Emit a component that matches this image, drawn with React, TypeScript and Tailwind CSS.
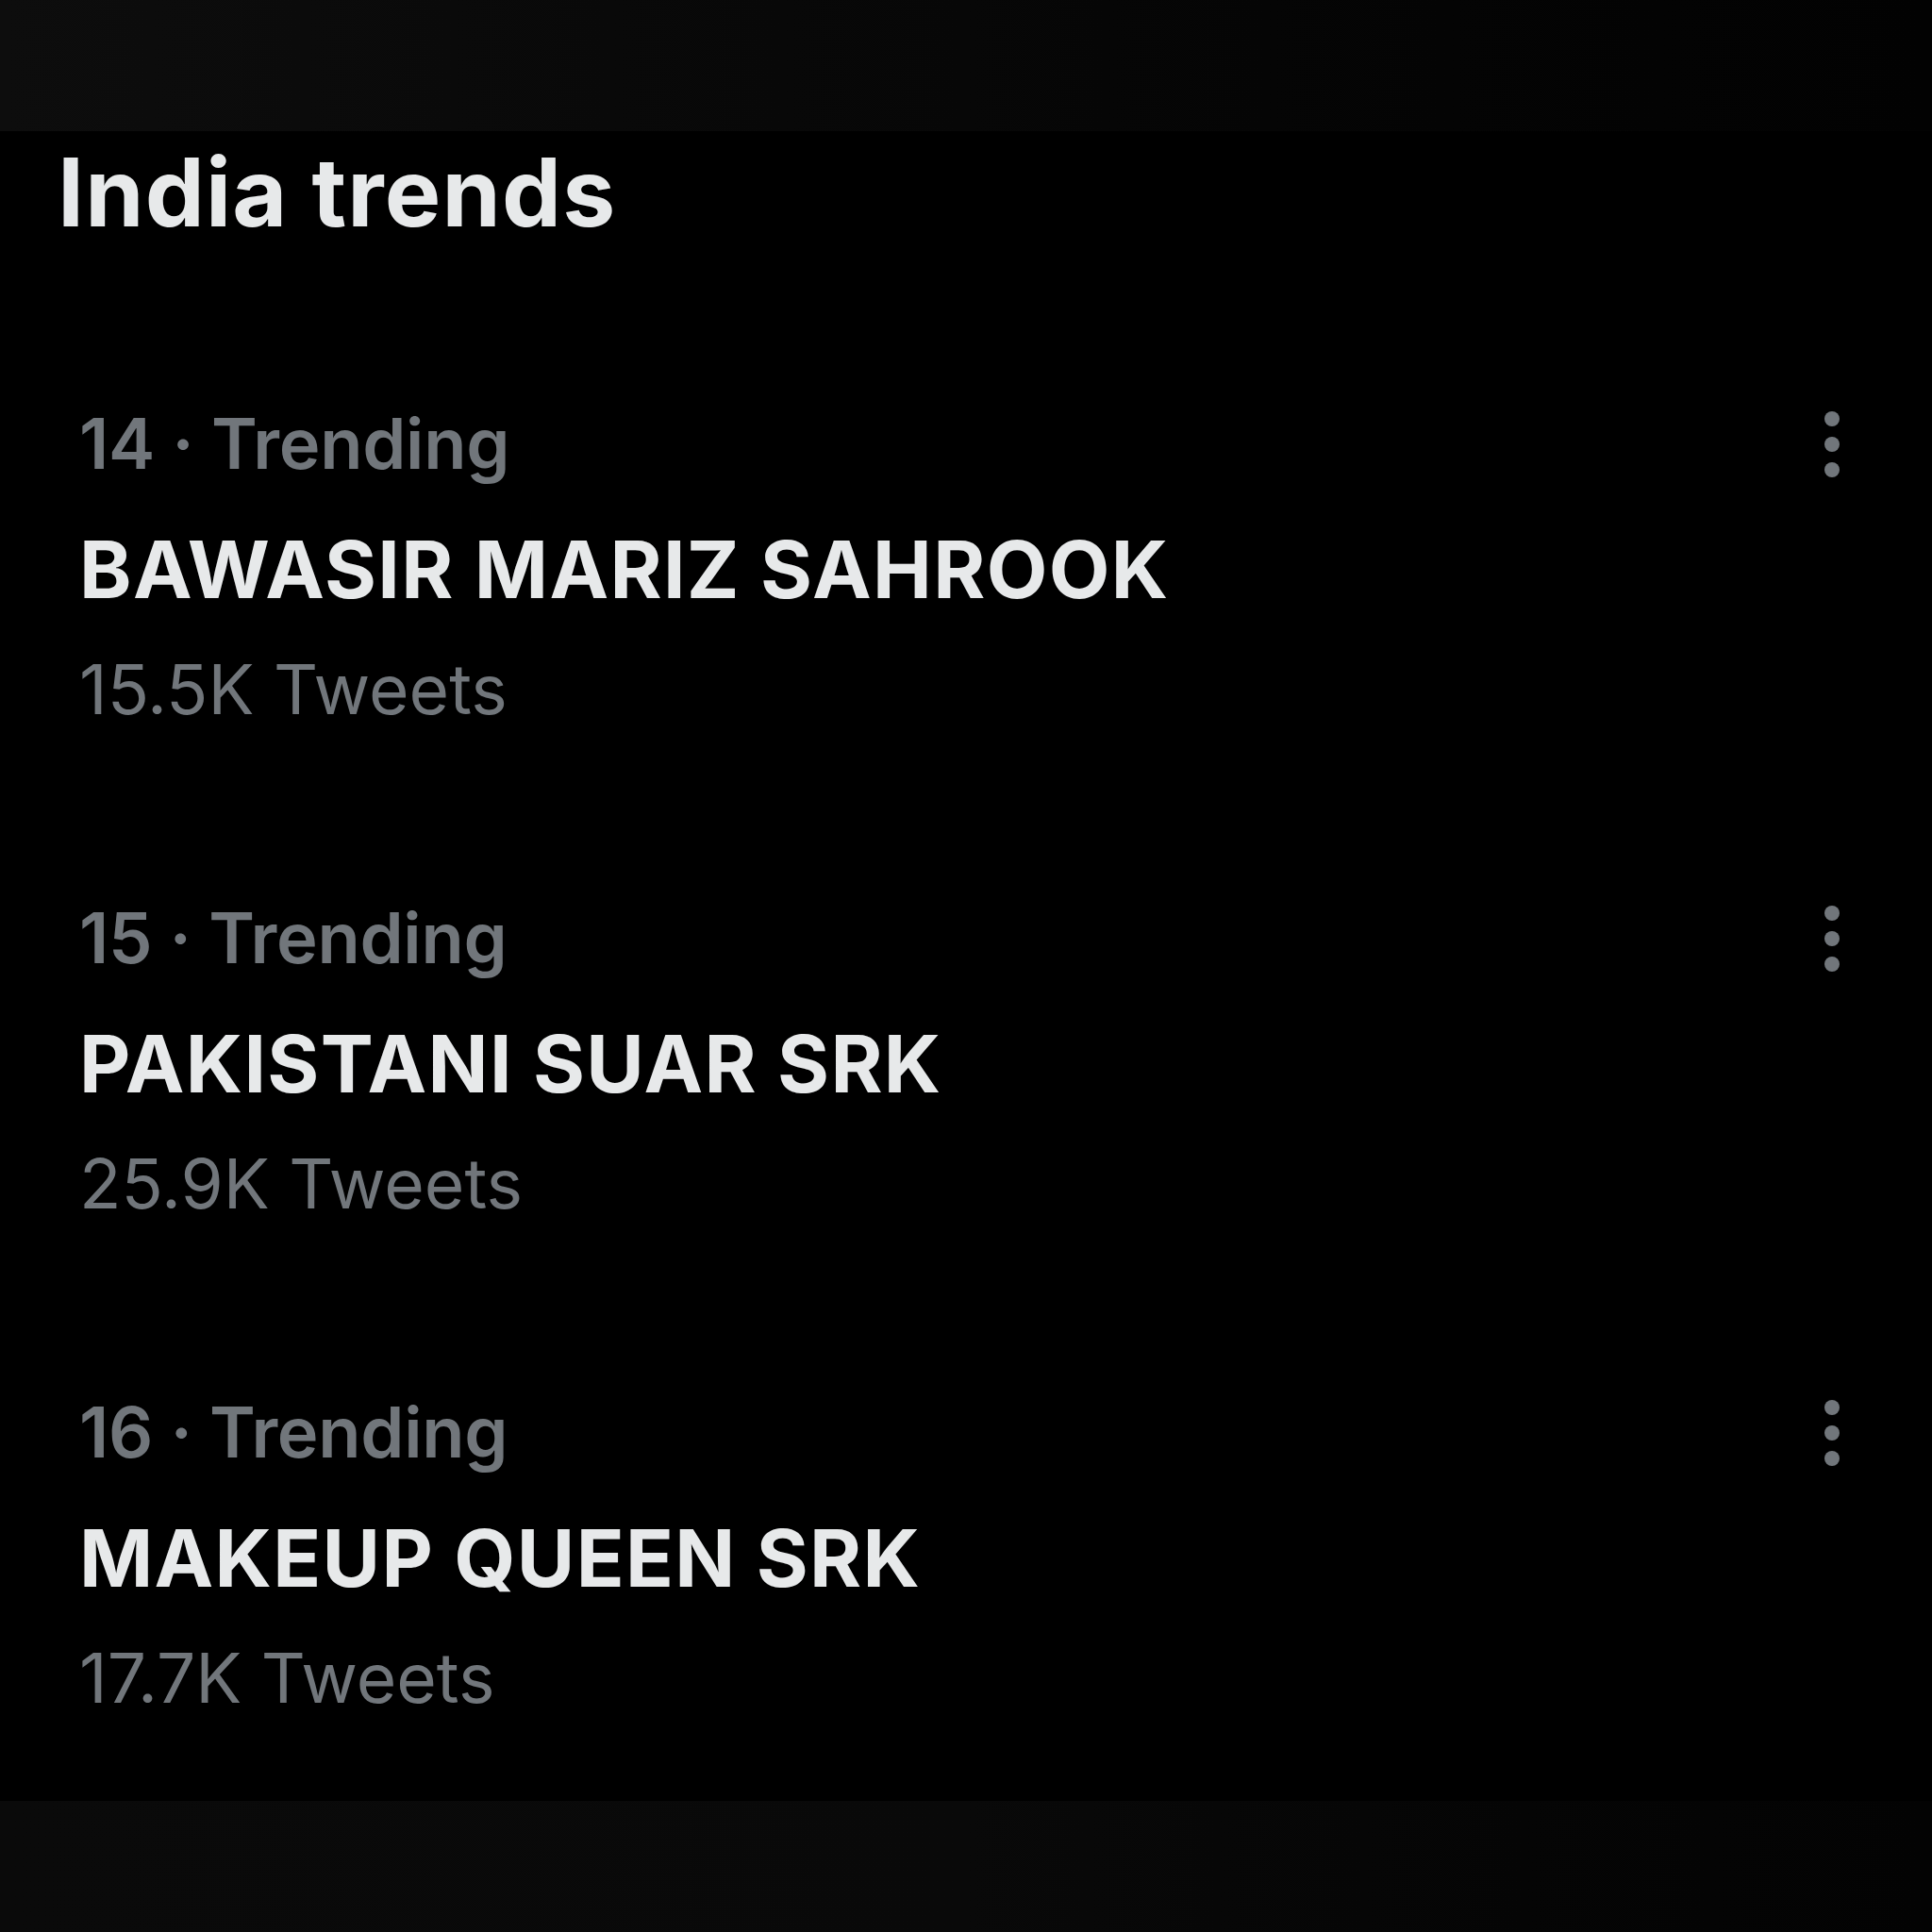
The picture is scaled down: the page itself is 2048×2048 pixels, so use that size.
import React from 'react';

const trends = [
  { rank: 14, name: "BAWASIR MARIZ SAHROOK", count: "15.5K Tweets" },
  { rank: 15, name: "PAKISTANI SUAR SRK", count: "25.9K Tweets" },
  { rank: 16, name: "MAKEUP QUEEN SRK", count: "17.7K Tweets" },
];

const MoreDots: React.FC = () => (
  <svg width="18" height="72" viewBox="0 0 18 72" className="text-[#71767b]">
    <circle cx="9" cy="9" r="8" fill="currentColor" />
    <circle cx="9" cy="36" r="8" fill="currentColor" />
    <circle cx="9" cy="63" r="8" fill="currentColor" />
  </svg>
);

export default function App() {
  return (
    <div className="w-[2048px] h-[2048px] bg-black flex flex-col font-['Inter',sans-serif]">
      <div className="h-[139px] shrink-0 bg-gradient-to-r from-[#0d0d0d] via-[#070707] to-[#020202]" />

      <h1 className="mt-[3px] pl-[61px] text-[100px] leading-[124px] font-bold text-[#e7e9ea] tracking-[1.2px]">
        India trends
      </h1>

      <div className="mt-[159px] flex flex-col gap-[174px]">
        {trends.map(t => (
          <div key={t.rank} className="flex justify-between pl-[84px] pr-[97px]">
            <div className="flex flex-col">
              <div className="text-[74px] leading-[90px] font-semibold text-[#71767b] tracking-[-0.3px]">
                {t.rank} · Trending
              </div>
              <div className="mt-[38px] text-[84px] leading-[102px] font-bold text-[#e7e9ea] tracking-[1.3px]">
                {t.name}
              </div>
              <div className="mt-[32px] text-[73px] leading-[88px] text-[#71767b]">
                {t.count}
              </div>
            </div>
            <div className="pt-[10px]">
              <MoreDots />
            </div>
          </div>
        ))}
      </div>

      <div className="mt-auto h-[139px] shrink-0 bg-gradient-to-r from-[#0a0a0a] via-[#090909] to-[#030303]" />
    </div>
  );
}
